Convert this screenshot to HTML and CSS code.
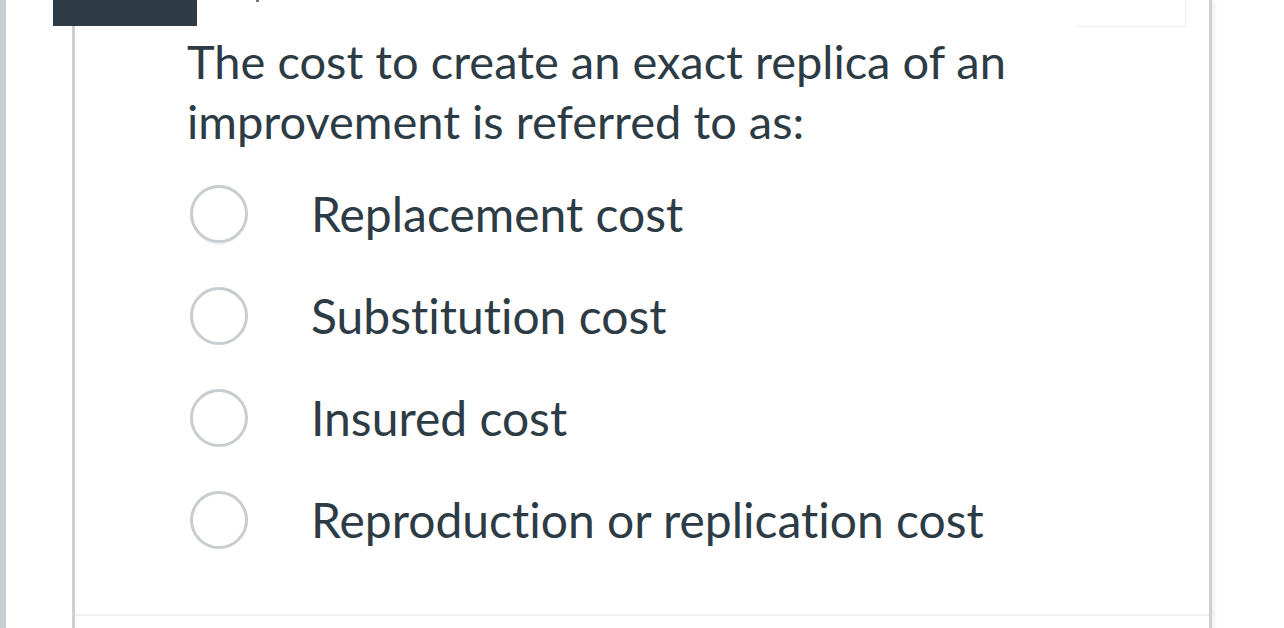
FILE: index.html
```html
<!DOCTYPE html>
<html>
<head>
<meta charset="utf-8">
<link rel="stylesheet" href="styles.css">
</head>
<body>
<div class="page">
  <div class="rail"></div>
  <div class="main">
    <div class="card">
      <div class="card-top">
        <div class="tab"></div>
        <div class="tick"></div>
        <div class="spacer"></div>
        <div class="corner-box"></div>
      </div>
      <div class="question">
        <p class="prompt">The cost to create an exact replica of an improvement is referred to as:</p>
        <ul class="answers">
          <li class="answer first"><span class="radio"></span><span class="label">Replacement cost</span></li>
          <li class="answer"><span class="radio"></span><span class="label">Substitution cost</span></li>
          <li class="answer"><span class="radio"></span><span class="label">Insured cost</span></li>
          <li class="answer"><span class="radio"></span><span class="label">Reproduction or replication cost</span></li>
        </ul>
      </div>
      <div class="next"></div>
    </div>
  </div>
</div>
</body>
</html>
```
FILE: styles.css
```css
html, body {
  margin: 0;
  padding: 0;
  background: #ffffff;
  height: 100%;
  overflow: hidden;
}
.page {
  display: flex;
  height: 628px;
  overflow: hidden;
  font-family: Lato, "Liberation Sans", sans-serif;
  font-variant-ligatures: none;
  color: #2d3b45;
}
.rail {
  width: 6px;
  flex: none;
  background: #c7cdd1;
}
.main {
  flex: 1;
  padding-left: 66px;
}
.card {
  position: relative;
  width: 1134px;
  height: 628px;
  border-left: 3px solid #cdd1d5;
  border-right: 3px solid #cdd1d5;
  box-shadow: 3px 0 4px rgba(0,0,0,0.06);
  background: #fff;
}
.card-top {
  display: flex;
  height: 27px;
  align-items: flex-start;
}
.tab {
  position: absolute;
  left: -22px;
  top: 0;
  width: 144px;
  height: 26px;
  background: #2d3b45;
}
.tick {
  margin-left: 181px;
  width: 3px;
  height: 2px;
  background: #6b7780;
}
.spacer { flex: 1; }
.corner-box {
  width: 109px;
  height: 27px;
  box-sizing: border-box;
  border-right: 1px solid #eeeeee;
  border-bottom: 1px solid #eeeeee;
  margin-right: 23px;
}
.question {
  padding-left: 112px;
  border-bottom: 2px solid #f1f1f1;
  height: 589px;
  box-sizing: border-box;
}
.prompt {
  margin: 0;
  padding-top: 4px;
  font-size: 47px;
  line-height: 60px;
  width: 880px;
}
.answers {
  list-style: none;
  margin: 12px 0 0 0;
  padding: 0;
}
.answer {
  display: flex;
  align-items: center;
  height: 102px;
}
.answer.first .radio {
  box-shadow: 0 4px 0 -2px #f3f3f3;
}
.radio {
  flex: none;
  width: 58px;
  height: 58px;
  box-sizing: border-box;
  border: 3px solid #c7cdd1;
  border-radius: 50%;
  margin-left: 3px;
  margin-right: 63px;
}
.label {
  font-size: 48px;
  line-height: 60px;
}
```
